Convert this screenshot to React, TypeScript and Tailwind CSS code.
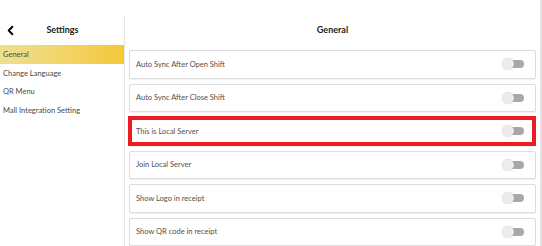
import { ChevronLeft } from "lucide-react";

const menu = ["General", "Change Language", "QR Menu", "Mall Integration Setting"];

const settings = [
  "Auto Sync After Open Shift",
  "Auto Sync After Close Shift",
  "This is Local Server",
  "Join Local Server",
  "Show Logo in receipt",
  "Show QR code in receipt",
];

function Toggle() {
  return (
    <div className="relative h-[12px] w-[22px]">
      <div className="absolute right-0 top-[2px] h-[8px] w-[16px] rounded-full bg-[#a8a8a8]" />
      <div className="absolute left-0 top-0 h-[12px] w-[12px] rounded-full bg-[#ececec] shadow-[0_0_1px_rgba(0,0,0,0.25)]" />
    </div>
  );
}

export default function App() {
  return (
    <div
      className="flex h-[246px] w-[542px] overflow-hidden bg-white pt-[15px] text-[#4a4a4a]"
      style={{ fontFamily: "Lato, 'Open Sans', sans-serif" }}
    >
      <aside className="flex w-[125px] shrink-0 flex-col border-r border-[#e6e6e6]">
        <div className="relative flex h-[30px] items-center justify-center">
          <ChevronLeft className="absolute left-[3px] top-[8px] h-[15px] w-[15px] text-black" strokeWidth={3} />
          <span className="pl-[1px] text-[9px] font-bold text-[#222]">Settings</span>
        </div>
        <ul className="flex flex-col">
          {menu.map((m, i) => (
            <li
              key={m}
              className={
                i === 0
                  ? "flex h-[19px] items-center bg-gradient-to-r from-[#eee08e] to-[#f5c834] pl-[3px] text-[7.5px]"
                  : "flex h-[18.5px] items-center pl-[3px] text-[7.5px]"
              }
            >
              {m}
            </li>
          ))}
        </ul>
      </aside>
      <main className="-mt-[15px] flex flex-1 flex-col border-r-2 border-[#e4e4e4] pl-[4px] pr-[4px] pt-[15px]">
        <div className="flex h-[30px] items-center justify-center">
          <span className="text-[9px] font-bold text-[#222]">General</span>
        </div>
        <div className="mt-[5px] flex flex-col gap-[5px]">
          {settings.map((s, i) => (
            <div
              key={s}
              className="relative flex h-[28.5px] shrink-0 items-center justify-between rounded-[2px] border border-[#dcdcdc] bg-white pl-[6px] pr-[11px] shadow-[0_1px_1px_rgba(0,0,0,0.06)]"
            >
              <span className="text-[7.5px] text-[#505050]">{s}</span>
              <Toggle />
              {i === 2 && (
                <div className="pointer-events-none absolute -bottom-[1px] -left-[2px] -right-[1px] -top-[2px] border-4 border-[#ed1c24]" />
              )}
            </div>
          ))}
        </div>
      </main>
    </div>
  );
}
